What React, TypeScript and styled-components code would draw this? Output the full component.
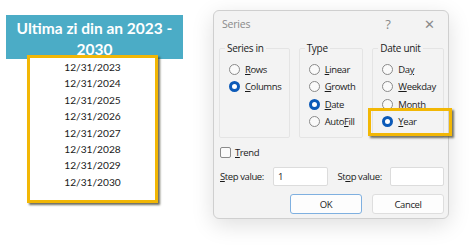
import React from "react";
import styled, { createGlobalStyle } from "styled-components";

const GlobalStyle = createGlobalStyle`
	html, body {
		margin: 0;
		padding: 0;
		background: #ffffff;
	}
	body {
		width: 474px;
		height: 246px;
		overflow: hidden;
	}
`;

const Page = styled.div`
	display: flex;
	width: 474px;
	height: 246px;
`;

const LeftColumn = styled.div`
	width: 190px;
	padding: 15px 0 0 6px;
	box-sizing: border-box;
	font-family: Lato, "Liberation Sans", sans-serif;
`;

const Header = styled.div`
	width: 177px;
	height: 44px;
	background: #4bacc6;
	color: #ffffff;
	font-weight: 700;
	font-size: 15.5px;
	line-height: 21px;
	text-align: center;
	padding-top: 3px;
	box-sizing: border-box;
	overflow: hidden;
`;

const DateBox = styled.div`
	position: relative;
	margin: -4px 0 0 21px;
	width: 131px;
	height: 148px;
	box-sizing: border-box;
	border: 3px solid #f2b705;
	background: #ffffff;
	box-shadow: 2px 2px 2px rgba(60, 60, 40, 0.75);
	padding-top: 1px;
	display: flex;
	flex-direction: column;
	align-items: center;
`;

const DateRow = styled.div`
	font-size: 10.2px;
	line-height: 16.4px;
	color: #1a1a1a;
`;

const Stage = styled.div`
	flex: 1;
	padding: 10px 0 0 23px;
`;

const Dialog = styled.div`
	position: relative;
	width: 236px;
	height: 209px;
	box-sizing: border-box;
	background: #f3f3f3;
	border: 1px solid #cfcfcf;
	border-radius: 6px;
	box-shadow: 0 6px 22px rgba(0, 0, 0, 0.13);
	padding: 0 4px 0 4px;
	font-family: "Open Sans", "Noto Sans", sans-serif;
	font-size: 9.5px;
	letter-spacing: -0.4px;
	color: #1b1b1b;
`;

const TitleBar = styled.div`
	display: flex;
	align-items: center;
	height: 30px;
	padding: 0 0 4px 4px;
	box-sizing: border-box;
	color: #8a8a8a;
	font-size: 10.5px;
	letter-spacing: -0.2px;
`;

const Title = styled.span`
	flex: 1;
`;

const TitleButton = styled.span<{ $w: number }>`
	width: ${(p) => p.$w}px;
	text-align: center;
	font-size: 13px;
	color: #8a8a8a;
`;

const Groups = styled.div`
	display: flex;
	gap: 9px;
	padding-left: 1px;
`;

const Group = styled.fieldset<{ $w: number }>`
	width: ${(p) => p.$w}px;
	height: 97px;
	box-sizing: border-box;
	margin: 0;
	padding: 6px 0 0 9px;
	border: 1px solid #e4e4e4;
	border-radius: 2px;
	display: flex;
	flex-direction: column;
	gap: 1.6px;
`;

const Legend = styled.legend`
	padding: 0 2px;
	margin-left: -4px;
	font-size: 10px;
	letter-spacing: -0.3px;
	color: #222;
`;

const Option = styled.label`
	display: flex;
	align-items: center;
	gap: 5px;
	height: 16px;
	white-space: nowrap;
`;

const Radio = styled.span<{ $on?: boolean }>`
	width: 11px;
	height: 11px;
	box-sizing: border-box;
	border-radius: 50%;
	flex: none;
	background: ${(p) => (p.$on ? "#ffffff" : "#fafafa")};
	border: ${(p) => (p.$on ? "3.5px solid #0c5ab8" : "1px solid #8a8a8a")};
`;

const Key = styled.span`
	text-decoration: underline;
	text-underline-offset: 1px;
`;

const Highlight = styled.div`
	position: absolute;
	left: 154px;
	top: 97px;
	width: 84px;
	height: 28px;
	box-sizing: border-box;
	border: 3px solid #f2b705;
	box-shadow: 2px 2px 2px rgba(60, 60, 40, 0.7);
`;

const TrendRow = styled.label`
	display: flex;
	align-items: center;
	gap: 4px;
	margin: 7px 0 0 2px;
	height: 14px;
`;

const Check = styled.span`
	width: 11px;
	height: 11px;
	box-sizing: border-box;
	border: 1px solid #8a8a8a;
	border-radius: 2px;
	background: #fafafa;
`;

const ValueRow = styled.div`
	display: flex;
	align-items: center;
	margin: 8px 0 0 2px;
	height: 19px;
`;

const FieldLabel = styled.span<{ $w: number; $pad?: number }>`
	width: ${(p) => p.$w}px;
	padding-left: ${(p) => p.$pad ?? 0}px;
	box-sizing: border-box;
	flex: none;
`;

const Field = styled.div`
	width: 55px;
	height: 19px;
	box-sizing: border-box;
	background: #ffffff;
	border: 1px solid #dcdcdc;
	border-radius: 2px;
	padding: 2px 0 0 4px;
`;

const Buttons = styled.div`
	display: flex;
	justify-content: flex-end;
	gap: 10px;
	margin: 8px 0 0 0;
`;

const Button = styled.div<{ $primary?: boolean }>`
	width: 72px;
	height: 20px;
	box-sizing: border-box;
	display: flex;
	align-items: center;
	justify-content: center;
	background: #fdfdfd;
	border: 1px solid ${(p) => (p.$primary ? "#7fb0e0" : "#dedede")};
	border-radius: 3px;
`;

const dates = [2023, 2024, 2025, 2026, 2027, 2028, 2029, 2030];

export default function App() {
	return (
		<>
			<GlobalStyle />
			<Page>
				<LeftColumn>
					<Header>Ultima zi din an 2023 - 2030</Header>
					<DateBox>
						{dates.map((y) => (
							<DateRow key={y}>12/31/{y}</DateRow>
						))}
					</DateBox>
				</LeftColumn>
				<Stage>
					<Dialog>
						<TitleBar>
							<Title>Series</Title>
							<TitleButton $w={52}>?</TitleButton>
							<TitleButton $w={30}>✕</TitleButton>
						</TitleBar>
						<Groups>
							<Group $w={71}>
								<Legend>Series in</Legend>
								<Option>
									<Radio />
									<span>
										<Key>R</Key>ows
									</span>
								</Option>
								<Option>
									<Radio $on />
									<span>
										<Key>C</Key>olumns
									</span>
								</Option>
							</Group>
							<Group $w={65}>
								<Legend>Type</Legend>
								<Option>
									<Radio />
									<span>
										<Key>L</Key>inear
									</span>
								</Option>
								<Option>
									<Radio />
									<span>
										<Key>G</Key>rowth
									</span>
								</Option>
								<Option>
									<Radio $on />
									<span>
										<Key>D</Key>ate
									</span>
								</Option>
								<Option>
									<Radio />
									<span>
										Auto<Key>F</Key>ill
									</span>
								</Option>
							</Group>
							<Group $w={72}>
								<Legend>Date unit</Legend>
								<Option>
									<Radio />
									<span>
										Da<Key>y</Key>
									</span>
								</Option>
								<Option>
									<Radio />
									<span>
										<Key>W</Key>eekday
									</span>
								</Option>
								<Option>
									<Radio />
									<span>
										<Key>M</Key>onth
									</span>
								</Option>
								<Option>
									<Radio $on />
									<span>
										<Key>Y</Key>ear
									</span>
								</Option>
							</Group>
						</Groups>
						<TrendRow>
							<Check />
							<span>
								<Key>T</Key>rend
							</span>
						</TrendRow>
						<ValueRow>
							<FieldLabel $w={53}>
								<Key>S</Key>tep value:
							</FieldLabel>
							<Field>1</Field>
							<FieldLabel $w={62} $pad={10}>
								St<Key>o</Key>p value:
							</FieldLabel>
							<Field />
						</ValueRow>
						<Buttons>
							<Button $primary>OK</Button>
							<Button>Cancel</Button>
						</Buttons>
						<Highlight />
					</Dialog>
				</Stage>
			</Page>
		</>
	);
}
